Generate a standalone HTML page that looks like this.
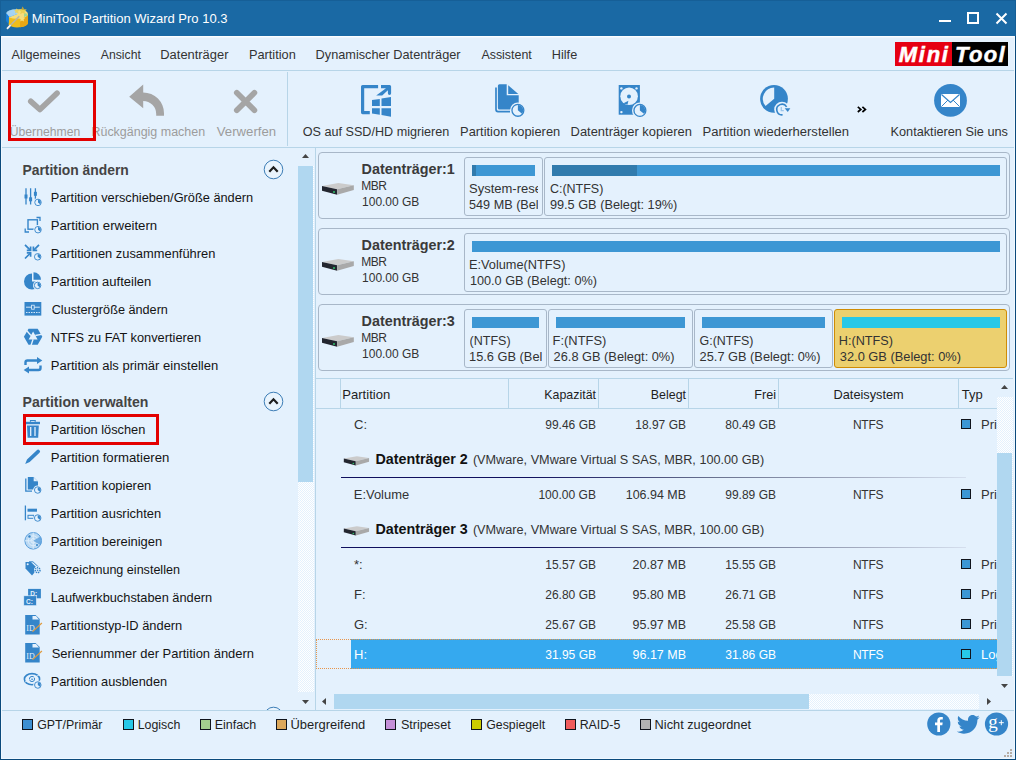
<!DOCTYPE html>
<html>
<head>
<meta charset="utf-8">
<title>MiniTool Partition Wizard Pro 10.3</title>
<style>
*{box-sizing:border-box;margin:0;padding:0}
html,body{width:1016px;height:760px;overflow:hidden;background:#e4f1fd}
body{font-family:"Liberation Sans",sans-serif;font-size:13px;color:#222;position:relative}
.a{position:absolute}
.t{position:absolute;white-space:nowrap;line-height:16px;height:16px;font-size:13px;color:#2b2b2b;margin-top:1px}
.r{text-align:right}
#win{position:absolute;left:0;top:0;width:1016px;height:760px;background:#e4f1fd;overflow:hidden}
#title{position:absolute;left:0;top:0;width:1016px;height:36px;background:#1a69a4;border-top:1px solid #165f97;border-left:1px solid #165f97;border-right:1px solid #165f97}
.hl{position:absolute;height:1px;background:#b7d5e8}
.vl{position:absolute;width:1px;background:#b7d5e8}
.menu{top:46px;color:#333}
.tb{top:123px;color:#333}
.tb.dis{color:#9c9c9c}
.sb{color:#141414}
.hd{font-weight:bold;color:#444;font-size:14px}
.redbox{position:absolute;border:3px solid #e30000;z-index:5}
.ic{position:absolute;width:20px;height:20px}
.dbox{position:absolute;left:318px;width:692px;height:67px;border:1px solid #a8b7c8;border-radius:4px}
.pbox{position:absolute;height:59px;border:1px solid #a8b7c8;border-radius:3px;overflow:hidden}
.trk{position:absolute;background-color:#e4f1fd;background-image:conic-gradient(#fff 25%,#e4f1fd 0 50%,#fff 0 75%,#e4f1fd 0);background-size:2px 2px}
.bar{position:absolute;height:11px;background:#3d97d4}
.dn{font-weight:bold;font-size:14px;color:#3a3a3a;letter-spacing:.3px}
.pt{color:#333}
.sq{position:absolute;width:10px;height:10px;border:1px solid #10141c}
.sq.lg{width:11px;height:11px}
.th{top:386px;color:#1e1e1e}
.sel{color:#fff}
</style>
</head>
<body>
<div id="win">
<!-- TITLE BAR -->
<div id="title"></div>
<svg class="a" style="left:4px;top:6px" width="26" height="25" viewBox="4 6 26 25">
<path d="M8.600 16V24.800C10.500 26.400 13.500 27.400 17 27.400C23.500 27.400 28 25.500 28 22.500V14Z" fill="#f0bd1a"/>
<path d="M20 14.500V27.200C24.800 26.700 28 25 28 22.500V14Z" fill="#e7a615"/>
<ellipse cx="17" cy="14" rx="11" ry="4.800" fill="#f6dc7a"/>
<path d="M6 14A11 4.800 0 0 1 17 9.200L17 14L8.800 17.200V23.500C7 22.600 6 21.500 6 20Z" fill="#1780dc"/>
<path d="M6.300 13.200A11 4.800 0 0 1 17 9.200L17.500 14L9.500 17Z" fill="#a4d3f4"/>
<path d="M24 12.500A11 4.800 0 0 1 27.800 15.500L24 17Z" fill="#9fd68f"/>
<path d="M16.800 8.200L17.600 10L19.500 10.200L18.100 11.500L18.500 13.400L16.800 12.400L15.100 13.400L15.500 11.500L14.100 10.200L16 10Z" fill="#ead35c"/>
<path d="M22.700 6.600L23.900 9.200L26.700 9.500L24.600 11.400L25.200 14.200L22.700 12.800L20.200 14.200L20.800 11.400L18.700 9.500L21.500 9.200Z" fill="#e9cf52"/>
<path d="M22.700 6.600L23.900 9.200L26.700 9.500L22.700 9.800L21.500 9.200Z" fill="#9a7a1a" opacity=".6"/>
<path d="M22 16L23 17.800L25 18L23.600 19.400L24 21.400L22 20.400L20.200 21.400L20.600 19.400L19.200 18L21.100 17.800Z" fill="#f3df7e"/>
<path d="M7.200 28.600L19.300 16.200" stroke="#b9b7a6" stroke-width="1.500"/><path d="M7 28.800L10.500 25.200" stroke="#f4f0f0" stroke-width="1.700"/>
</svg>
<div class="t" style="left:31.70px;top:10.00px;color:#fff;font-size:13.00px;letter-spacing:-0.000px">MiniTool Partition Wizard Pro 10.3</div>
<div class="a" style="left:939px;top:20px;width:12px;height:2px;background:#fff"></div>
<div class="a" style="left:967px;top:12px;width:12px;height:12px;border:2px solid #fff"></div>
<svg class="a" style="left:995px;top:12px" width="13" height="13" viewBox="0 0 13 13"><path d="M1.500 1.500L11.500 11.500M11.500 1.500L1.500 11.500" stroke="#fff" stroke-width="2" fill="none"/></svg>
<!-- MENU BAR -->
<div class="t menu" style="left:11.60px;font-size:12.60px;letter-spacing:0.000px">Allgemeines</div>
<div class="t menu" style="left:100.80px;font-size:12.21px;letter-spacing:0.000px">Ansicht</div>
<div class="t menu" style="left:160.31px;font-size:12.92px;letter-spacing:0.000px">Datenträger</div>
<div class="t menu" style="left:248.92px;font-size:12.79px;letter-spacing:0.000px">Partition</div>
<div class="t menu" style="left:315.62px;font-size:12.73px;letter-spacing:0.000px">Dynamischer Datenträger</div>
<div class="t menu" style="left:481.40px;font-size:12.43px;letter-spacing:0.000px">Assistent</div>
<div class="t menu" style="left:551.82px;font-size:12.70px;letter-spacing:0.000px">Hilfe</div>
<div class="a" style="left:895px;top:42px;width:57px;height:24px;background:#e60012"></div>
<div class="a" style="left:952px;top:42px;width:56px;height:24px;background:#000"></div>
<div class="a" style="left:898.8px;top:43.6px;height:22px;line-height:22px;font-size:22px;font-weight:bold;font-style:italic;color:#fff;letter-spacing:1.7px;-webkit-text-stroke:.5px #fff;white-space:nowrap">Mini</div>
<div class="a" style="left:955px;top:43.6px;height:22px;line-height:22px;font-size:22px;font-weight:bold;font-style:italic;color:#fff;letter-spacing:1.3px;-webkit-text-stroke:.5px #fff;white-space:nowrap">Tool</div>
<div class="hl" style="left:1px;top:70px;width:1014px"></div>
<!-- TOOLBAR -->
<div class="redbox" style="left:8px;top:80px;width:88px;height:61px"></div>
<svg class="a" style="left:24px;top:84px" width="40" height="34" viewBox="24 84 40 34"><path d="M30.800 101.300L39.900 109.500L57 93.300" stroke="#a5a5a5" stroke-width="5.700" stroke-linecap="round" stroke-linejoin="round" fill="none"/></svg>
<div class="t tb dis" style="left:9.76px;font-size:12.20px;letter-spacing:0.000px">Übernehmen</div>
<svg class="a" style="left:126px;top:82px" width="42" height="36" viewBox="126 82 42 36"><path d="M129.200 96.700L143.200 84.600V92.500A20.800 20.800 0 0 1 164 113.300V115.700H156.200V113.900A13 13 0 0 0 143.200 100.900V108.300Z" fill="#a5a5a5"/></svg>
<div class="t tb dis" style="left:91.44px;font-size:12.48px;letter-spacing:0.000px">Rückgängig machen</div>
<svg class="a" style="left:228px;top:84px" width="36" height="34" viewBox="228 84 36 34"><path d="M236.800 92.800L254.400 110.200M254.400 92.800L236.800 110.200" stroke="#a5a5a5" stroke-width="5.700" stroke-linecap="round" fill="none"/></svg>
<div class="t tb dis" style="left:216.80px;font-size:13.18px;letter-spacing:0.000px">Verwerfen</div>
<div class="vl" style="left:287px;top:72px;height:74px"></div>
<!-- OS migrate icon -->
<svg class="a" style="left:359px;top:83px" width="34" height="35" viewBox="359 83 34 35">
<path d="M378.100 86.600H362.600V112.600H369.800" stroke="#3585c9" stroke-width="3.200" fill="none" stroke-linejoin="round"/>
<path d="M381 85H389.600A1.500 1.500 0 0 1 391.100 86.500V93.300A1.600 1.600 0 0 1 387.900 93.300V90.300L382.200 95.600H376.200L386 88.200H381Z" fill="#3585c9"/>
<path d="M372 100.100L379.800 99V106H372ZM381.500 98.500L391 97V106H381.500ZM372 108.200H379.800V114.700L372 113.500ZM381.500 108.200H391V116.800L381.500 115Z" fill="#3585c9"/>
</svg>
<div class="t tb" style="left:302.80px;font-size:12.62px;letter-spacing:0.000px">OS auf SSD/HD migrieren</div>
<!-- Partition copy icon -->
<svg class="a" style="left:493px;top:83px" width="34" height="36" viewBox="493 83 34 36">
<path d="M496 87.600V109.600A2 2 0 0 0 498 111.600H510" stroke="#3585c9" stroke-width="1.700" fill="none"/>
<path d="M499.400 84.200H506.700V95.300H518.700V109.500H499.400A1.500 1.500 0 0 1 497.900 108V85.700A1.500 1.500 0 0 1 499.400 84.200Z" fill="#3585c9"/>
<path d="M508.200 85.200V93.900H518.300Z" fill="#3585c9"/>
<circle cx="517.9" cy="110.3" r="7.9" fill="#e4f1fd"/><circle cx="517.9" cy="110.3" r="5.95" fill="#e4f1fd" stroke="#3585c9" stroke-width="1.300"/><path d="M517.9 110.3V105.00A5.30 5.30 0 0 1 521.96 113.71Z" fill="#3585c9"/>
</svg>
<div class="t tb" style="left:460.11px;font-size:12.86px;letter-spacing:0.000px">Partition kopieren</div>
<!-- Disk copy icon -->
<svg class="a" style="left:617px;top:83px" width="32" height="36" viewBox="617 83 32 36">
<rect x="618.700" y="85" width="21.200" height="29.700" fill="#3585c9"/>
<circle cx="629.100" cy="96.300" r="8.800" fill="#e4f1fd"/><circle cx="629" cy="96.500" r="2" fill="#3585c9"/>
<path d="M623 103.400L628.400 100.800L627.500 104.600Z" fill="#3585c9"/>
<circle cx="621.400" cy="88.400" r="1.200" fill="#e4f1fd"/><circle cx="636.500" cy="88.400" r="1.200" fill="#e4f1fd"/><circle cx="621.400" cy="112.100" r="1.200" fill="#e4f1fd"/>
<circle cx="639.9" cy="110.4" r="7.9" fill="#e4f1fd"/><circle cx="639.9" cy="110.4" r="5.95" fill="#e4f1fd" stroke="#3585c9" stroke-width="1.300"/><path d="M639.9 110.4V105.10A5.30 5.30 0 0 1 643.96 113.81Z" fill="#3585c9"/>
</svg>
<div class="t tb" style="left:570.61px;font-size:12.92px;letter-spacing:-0.000px">Datenträger kopieren</div>
<!-- Partition recovery icon -->
<svg class="a" style="left:759px;top:83px" width="34" height="36" viewBox="759 83 34 36">
<circle cx="774" cy="98.800" r="13.900" fill="#3585c9"/>
<path d="M774.200 98.700V87.400A11.300 11.300 0 0 0 765.54 105.96Z" fill="#e4f1fd"/>
<circle cx="782" cy="109.500" r="7.800" fill="#e4f1fd"/>
<path d="M786.600 106.800A5.300 5.300 0 1 0 782.600 114.800" stroke="#3585c9" stroke-width="1.600" fill="none"/>
<path d="M784.700 108.200H790.300L787.800 112Z" fill="#3585c9"/>
<path d="M781.300 107V110.700H783.800" stroke="#9cc6ea" stroke-width="1.300" fill="none"/>
</svg>
<div class="t tb" style="left:702.60px;font-size:13.05px;letter-spacing:0.000px">Partition wiederherstellen</div>
<svg class="a" style="left:856px;top:105px" width="12" height="9" viewBox="856 105 12 9"><path d="M857.800 106.800L860.800 109.400L857.800 112M862.400 106.800L865.400 109.400L862.400 112" stroke="#000" stroke-width="1.700" fill="none"/></svg>
<!-- Contact icon -->
<svg class="a" style="left:933px;top:83px" width="35" height="35" viewBox="933 83 35 35">
<circle cx="950.500" cy="100.400" r="16.400" fill="#3585c9"/>
<rect x="941" y="94" width="19" height="13" rx="1" fill="#fff"/>
<path d="M941.500 94.500L950.500 102.500L959.500 94.500" stroke="#3585c9" stroke-width="1.200" fill="none"/>
<path d="M941.500 106.500L948 100M959.500 106.500L953 100" stroke="#3585c9" stroke-width="1" fill="none"/>
</svg>
<div class="t tb" style="left:890.52px;font-size:12.72px;letter-spacing:-0.000px">Kontaktieren Sie uns</div>
<div class="hl" style="left:1px;top:147px;width:1014px"></div>
<!-- LEFT PANEL -->
<div class="t hd" style="left:22.50px;top:161.35px;font-size:13.87px;letter-spacing:0.000px">Partition ändern</div>
<svg class="a" style="left:263px;top:159px" width="21" height="21" viewBox="0 0 21 21"><circle cx="10.500" cy="10.500" r="9.300" fill="#e9f4fd" stroke="#3c7db6" stroke-width="1"/><path d="M6.300 12.700L10.500 8.300L14.700 12.700" stroke="#1e1e1e" stroke-width="2.200" fill="none"/></svg>
<!-- icons group 1 -->
<svg class="a" style="left:23px;top:187px" width="20" height="20" viewBox="23 187 20 20">
<path d="M26 188.200V204.500M30.600 188.200V204.500M35.400 188.200V199.500" stroke="#3585c9" stroke-width="1.300" fill="none"/>
<rect x="24.500" y="194.500" width="3" height="4" fill="#3585c9"/><rect x="29.100" y="197.300" width="3" height="4" fill="#3585c9"/><rect x="33.900" y="191.800" width="3" height="4" fill="#3585c9"/>
<circle cx="38.0" cy="202.4" r="4.6" fill="#e4f1fd"/><circle cx="38.0" cy="202.4" r="3.25" fill="#e4f1fd" stroke="#3585c9" stroke-width=".900"/><path d="M38.0 202.4V199.60A2.80 2.80 0 0 1 40.14 204.20Z" fill="#3585c9"/>
</svg>
<div class="t sb" style="left:50.72px;top:189.07px;font-size:12.79px;letter-spacing:0.000px">Partition verschieben/Größe ändern</div>
<svg class="a" style="left:23px;top:215px" width="20" height="20" viewBox="23 215 20 20">
<rect x="28" y="219.800" width="9.400" height="9.400" fill="none" stroke="#3585c9" stroke-width="1.400"/>
<path d="M36.500 217.500H40V221M25.200 228.500V232H29" stroke="#3585c9" stroke-width="1.300" fill="none"/>
<circle cx="38.0" cy="229.7" r="4.6" fill="#e4f1fd"/><circle cx="38.0" cy="229.7" r="3.25" fill="#e4f1fd" stroke="#3585c9" stroke-width=".900"/><path d="M38.0 229.7V226.90A2.80 2.80 0 0 1 40.14 231.50Z" fill="#3585c9"/>
</svg>
<div class="t sb" style="left:50.68px;top:216.92px;font-size:13.23px;letter-spacing:-0.000px">Partition erweitern</div>
<svg class="a" style="left:23px;top:243px" width="20" height="20" viewBox="23 243 20 20">
<path d="M25 244.800L30 249.800M39 244.800L34 249.800M25 258.500L30 253.500" stroke="#3585c9" stroke-width="1.700" fill="none"/>
<path d="M26.800 250.400H30.600V246.600M37.200 250.400H33.400V246.600M26.800 252.900H30.600V256.700" stroke="#3585c9" stroke-width="1.700" fill="none"/>
<circle cx="37.7" cy="256.8" r="4.6" fill="#e4f1fd"/><circle cx="37.7" cy="256.8" r="3.25" fill="#e4f1fd" stroke="#3585c9" stroke-width=".900"/><path d="M37.7 256.8V254.00A2.80 2.80 0 0 1 39.84 258.60Z" fill="#3585c9"/>
</svg>
<div class="t sb" style="left:50.71px;top:245.04px;font-size:12.88px;letter-spacing:0.000px">Partitionen zusammenführen</div>
<svg class="a" style="left:23px;top:271px" width="20" height="20" viewBox="23 271 20 20">
<path d="M32 273.500A8 8 0 1 0 40 281.500H32Z" fill="#3585c9"/><path d="M33.500 272.200A7.500 7.500 0 0 1 41 279.800H33.500Z" fill="#3585c9"/>
<circle cx="37.6" cy="285.4" r="4.6" fill="#e4f1fd"/><circle cx="37.6" cy="285.4" r="3.25" fill="#e4f1fd" stroke="#3585c9" stroke-width=".900"/><path d="M37.6 285.4V282.60A2.80 2.80 0 0 1 39.74 287.20Z" fill="#3585c9"/>
</svg>
<div class="t sb" style="left:50.70px;top:272.99px;font-size:13.02px;letter-spacing:0.000px">Partition aufteilen</div>
<svg class="a" style="left:23px;top:299px" width="20" height="20" viewBox="23 299 20 20">
<rect x="24.500" y="302" width="16.800" height="13.600" fill="#3585c9"/>
<path d="M26 307.200H39.800" stroke="#e4f1fd" stroke-width=".9"/><rect x="31.600" y="305.200" width="2.600" height="4" fill="#3585c9" stroke="#e4f1fd" stroke-width=".8"/>
<path d="M26 312.500H39.800" stroke="#e4f1fd" stroke-width=".9" stroke-dasharray="1.500 1"/>
</svg>
<div class="t sb" style="left:51.70px;top:301.11px;font-size:12.68px;letter-spacing:0.000px">Clustergröße ändern</div>
<svg class="a" style="left:23px;top:327px" width="20" height="20" viewBox="23 327 20 20">
<path d="M42.30 336.80L37.70 344.77L28.50 344.77L23.90 336.80L28.50 328.83L37.70 328.83Z" fill="#3585c9"/><path d="M33.10 331.60L35.35 335.50L37.60 339.40L33.10 339.40L28.60 339.40L30.85 335.50Z" fill="#e4f1fd"/><path d="M35.27 335.55L42.73 334.10M33.10 339.30L30.63 346.49M30.93 335.55L25.95 329.81" stroke="#e4f1fd" stroke-width="1.400" fill="none"/>
</svg>
<div class="t sb" style="left:50.72px;top:329.07px;font-size:12.80px;letter-spacing:0.000px">NTFS zu FAT konvertieren</div>
<svg class="a" style="left:22px;top:355px" width="22" height="20" viewBox="22 355 22 20">
<path d="M25.500 365V362.500A2 2 0 0 1 27.500 360.500H38" stroke="#3585c9" stroke-width="2.400" fill="none"/><path d="M37 357L42.300 360.500L37 364Z" fill="#3585c9"/>
<path d="M40.500 365.500V368A2 2 0 0 1 38.500 370H28" stroke="#3585c9" stroke-width="2.400" fill="none"/><path d="M29 366.500L23.700 370L29 373.500Z" fill="#3585c9"/>
</svg>
<div class="t sb" style="left:50.70px;top:356.98px;font-size:13.05px;letter-spacing:0.000px">Partition als primär einstellen</div>
<!-- group 2 -->
<div class="t hd" style="left:22.50px;top:393.27px;font-size:14.08px;letter-spacing:0.000px">Partition verwalten</div>
<svg class="a" style="left:263px;top:391px" width="21" height="21" viewBox="0 0 21 21"><circle cx="10.500" cy="10.500" r="9.300" fill="#e9f4fd" stroke="#3c7db6" stroke-width="1"/><path d="M6.300 12.700L10.500 8.300L14.700 12.700" stroke="#1e1e1e" stroke-width="2.200" fill="none"/></svg>
<div class="redbox" style="left:23px;top:414px;width:136px;height:31px"></div>
<svg class="a" style="left:23px;top:419px" width="20" height="20" viewBox="23 419 20 20">
<path d="M30.500 421.800V420.500H35.200V421.800" stroke="#3585c9" stroke-width="1.200" fill="none"/><rect x="25.800" y="421.800" width="14.200" height="2.400" fill="#3585c9"/>
<path d="M27 425.500H38.800L38.200 437.700H27.600Z" fill="#3585c9"/><path d="M30.700 427V436M35 427V436" stroke="#e4f1fd" stroke-width="1.300"/>
</svg>
<div class="t sb" style="left:50.72px;top:421.07px;font-size:12.80px;letter-spacing:-0.000px">Partition löschen</div>
<svg class="a" style="left:23px;top:447px" width="20" height="20" viewBox="23 447 20 20">
<path d="M25.200 464L27 459.500L36.800 450.200A1.500 1.500 0 0 1 39.500 452.800L29.700 462Z" fill="#3585c9"/>
</svg>
<div class="t sb" style="left:50.69px;top:448.94px;font-size:13.18px;letter-spacing:0.000px">Partition formatieren</div>
<svg class="a" style="left:23px;top:475px" width="20" height="20" viewBox="23 475 20 20">
<path d="M25.800 478.500V491.200H32" stroke="#3585c9" stroke-width="1.300" fill="none"/>
<path d="M27.800 477H33.500L38 481.500V489.500H27.800Z" fill="#3585c9"/><path d="M33.700 477.300V481.300H37.700Z" fill="#e4f1fd"/>
<circle cx="37.7" cy="490.0" r="4.6" fill="#e4f1fd"/><circle cx="37.7" cy="490.0" r="3.25" fill="#e4f1fd" stroke="#3585c9" stroke-width=".900"/><path d="M37.7 490.0V487.20A2.80 2.80 0 0 1 39.84 491.80Z" fill="#3585c9"/>
</svg>
<div class="t sb" style="left:50.71px;top:477.02px;font-size:12.93px;letter-spacing:0.000px">Partition kopieren</div>
<svg class="a" style="left:23px;top:503px" width="20" height="20" viewBox="23 503 20 20">
<path d="M25.400 505.500V520.300" stroke="#3585c9" stroke-width="1.300"/><rect x="27.500" y="508.700" width="9.500" height="3" fill="#3585c9"/><rect x="28" y="515.300" width="5.500" height="3" fill="none" stroke="#3585c9" stroke-width="1"/>
<circle cx="37.7" cy="518.0" r="4.6" fill="#e4f1fd"/><circle cx="37.7" cy="518.0" r="3.25" fill="#e4f1fd" stroke="#3585c9" stroke-width=".900"/><path d="M37.7 518.0V515.20A2.80 2.80 0 0 1 39.84 519.80Z" fill="#3585c9"/>
</svg>
<div class="t sb" style="left:50.71px;top:505.03px;font-size:12.90px;letter-spacing:0.000px">Partition ausrichten</div>
<svg class="a" style="left:23px;top:531px" width="20" height="20" viewBox="23 531 20 20">
<circle cx="33.200" cy="540.800" r="8.300" fill="#b8d8f3" stroke="#5a9fdc" stroke-width="1"/><circle cx="33.200" cy="540.800" r="5" fill="none" stroke="#e4f1fd" stroke-width=".8"/><circle cx="33.200" cy="540.800" r="2.300" fill="none" stroke="#e4f1fd" stroke-width=".8"/>
<path d="M33.200 532.500V549M25 540.800H41.500" stroke="#e4f1fd" stroke-width=".8"/><path d="M33.200 540.800L40.500 536.500A8.300 8.300 0 0 1 40.500 545Z" fill="#5a9fdc" opacity=".8"/><circle cx="29.500" cy="536.500" r="1.200" fill="#3585c9"/><circle cx="37" cy="545" r="1" fill="#3585c9"/>
</svg>
<div class="t sb" style="left:50.70px;top:533.02px;font-size:12.95px;letter-spacing:0.000px">Partition bereinigen</div>
<svg class="a" style="left:23px;top:559px" width="20" height="20" viewBox="23 559 20 20">
<path d="M25.500 562H31L36.500 567.500V570L32 575.500L25.500 568.500Z" fill="#3585c9"/><path d="M29 561.800H33L39 567.500" stroke="#3585c9" stroke-width="1" fill="none"/><circle cx="27.700" cy="564.300" r="1" fill="#e4f1fd"/>
<circle cx="37.600" cy="570.200" r="3.600" fill="#e4f1fd"/><circle cx="37.600" cy="570.200" r="2.400" fill="none" stroke="#3585c9" stroke-width="1.500" stroke-dasharray="1.200 .700"/><circle cx="37.600" cy="570.200" r=".8" fill="#3585c9"/>
</svg>
<div class="t sb" style="left:50.73px;top:561.15px;font-size:12.57px;letter-spacing:0.000px">Bezeichnung einstellen</div>
<svg class="a" style="left:23px;top:587px" width="20" height="20" viewBox="23 587 20 20">
<rect x="28.100" y="588.900" width="12.800" height="9.400" fill="#3585c9"/><rect x="23.800" y="595.800" width="12.600" height="9.900" fill="#3585c9" stroke="#e4f1fd" stroke-width=".6"/>
<text x="30.300" y="596.300" font-family="Liberation Sans" font-weight="bold" font-size="6.500" fill="#e4f1fd">D:</text><text x="26" y="603.800" font-family="Liberation Sans" font-weight="bold" font-size="6.500" fill="#e4f1fd">C:</text>
</svg>
<div class="t sb" style="left:50.71px;top:589.07px;font-size:12.81px;letter-spacing:0.000px">Laufwerkbuchstaben ändern</div>
<svg class="a" style="left:23px;top:613px" width="20" height="24" viewBox="23 613 20 24">
<path d="M25.200 615H35.500L39.700 619V634.500H25.200Z" fill="#3585c9"/><path d="M32.500 616H36L39 619.500H32.500Z" fill="#e4f1fd"/>
<text x="26.300" y="630.500" font-family="Liberation Serif" font-size="8" fill="#e4f1fd">ID</text><path d="M32.500 631.600L41.900 623" stroke="#e09a3c" stroke-width="1.200"/>
</svg>
<div class="t sb" style="left:50.71px;top:617.05px;font-size:12.87px;letter-spacing:0.000px">Partitionstyp-ID ändern</div>
<svg class="a" style="left:23px;top:641px" width="20" height="24" viewBox="23 641 20 24">
<path d="M25.200 643H35.500L39.700 647V662.500H25.200Z" fill="#3585c9"/><path d="M32.500 644H36L39 647.500H32.500Z" fill="#e4f1fd"/>
<text x="26.300" y="658.500" font-family="Liberation Serif" font-size="8" fill="#e4f1fd">ID</text><path d="M32.500 659.600L41.900 651" stroke="#e09a3c" stroke-width="1.200"/>
</svg>
<div class="t sb" style="left:51.70px;top:645.01px;font-size:12.96px;letter-spacing:0.000px">Seriennummer der Partition ändern</div>
<svg class="a" style="left:23px;top:671px" width="20" height="20" viewBox="23 671 20 20">
<ellipse cx="32" cy="679.200" rx="7.600" ry="5.600" fill="#e4f1fd" stroke="#3585c9" stroke-width="1.600"/><circle cx="32" cy="679" r="2.600" fill="none" stroke="#3585c9" stroke-width="1"/><circle cx="32" cy="679" r="1" fill="#3585c9"/>
<path d="M25 682L39 675" stroke="#e4f1fd" stroke-width=".8"/>
<circle cx="37.8" cy="685.0" r="4.6" fill="#e4f1fd"/><circle cx="37.8" cy="685.0" r="3.25" fill="#e4f1fd" stroke="#3585c9" stroke-width=".900"/><path d="M37.8 685.0V682.20A2.80 2.80 0 0 1 39.94 686.80Z" fill="#3585c9"/>
</svg>
<div class="t sb" style="left:50.72px;top:673.08px;font-size:12.78px;letter-spacing:0.000px">Partition ausblenden</div>
<!-- partial next-group button clipped by bottom -->
<div class="a" style="left:263px;top:700px;width:21px;height:10px;overflow:hidden"><svg class="a" style="left:0;top:6px" width="21" height="21" viewBox="0 0 21 21"><circle cx="10.500" cy="10.500" r="9.300" fill="#e9f4fd" stroke="#3c7db6" stroke-width="1"/></svg></div>
<!-- left scrollbar -->
<div class="trk" style="left:298px;top:166px;width:16px;height:526px"></div>
<div class="a" style="left:298px;top:166px;width:15px;height:316px;background:#b0d7f0"></div>
<svg class="a" style="left:302px;top:154px" width="7" height="4" viewBox="0 0 7 4"><path d="M0 4L3.500 0L7 4Z" fill="#454545"/></svg>
<svg class="a" style="left:302px;top:700px" width="7" height="4" viewBox="0 0 7 4"><path d="M0 0L3.500 4L7 0Z" fill="#454545"/></svg>
<div class="vl" style="left:315px;top:148px;height:562px"></div>
<!-- DISK MAP -->
<div class="dbox" style="top:152px"></div>
<svg class="a" style="left:321px;top:182px" width="34" height="14" viewBox="321 182 34 14"><path d="M322 186L338.400 182.900L353.800 185.300L337.100 189.300Z" fill="#cbcbcb"/><path d="M322 186L337.100 189.300V194.700L322 190.700Z" fill="#23262f"/><path d="M337.100 189.300L353.800 185.300V190.100L337.100 194.700Z" fill="#a9a9a9"/><circle cx="334" cy="192.100" r="1" fill="#2fc06a"/></svg>
<div class="t dn" style="left:361.60px;top:160.14px;font-size:14.33px;letter-spacing:0.000px">Datenträger:1</div>
<div class="t pt" style="left:361.18px;top:177.35px;font-size:12.00px;letter-spacing:-0.492px">MBR</div>
<div class="t pt" style="left:362.10px;top:193.35px;font-size:12.00px;letter-spacing:-0.019px">100.00 GB</div>
<div class="dbox" style="top:228px"></div>
<svg class="a" style="left:321px;top:258px" width="34" height="14" viewBox="321 182 34 14"><path d="M322 186L338.400 182.900L353.800 185.300L337.100 189.300Z" fill="#cbcbcb"/><path d="M322 186L337.100 189.300V194.700L322 190.700Z" fill="#23262f"/><path d="M337.100 189.300L353.800 185.300V190.100L337.100 194.700Z" fill="#a9a9a9"/><circle cx="334" cy="192.100" r="1" fill="#2fc06a"/></svg>
<div class="t dn" style="left:361.60px;top:236.14px;font-size:14.33px;letter-spacing:0.000px">Datenträger:2</div>
<div class="t pt" style="left:361.18px;top:253.35px;font-size:12.00px;letter-spacing:-0.492px">MBR</div>
<div class="t pt" style="left:362.10px;top:269.35px;font-size:12.00px;letter-spacing:-0.019px">100.00 GB</div>
<div class="dbox" style="top:304px"></div>
<svg class="a" style="left:321px;top:334px" width="34" height="14" viewBox="321 182 34 14"><path d="M322 186L338.400 182.900L353.800 185.300L337.100 189.300Z" fill="#cbcbcb"/><path d="M322 186L337.100 189.300V194.700L322 190.700Z" fill="#23262f"/><path d="M337.100 189.300L353.800 185.300V190.100L337.100 194.700Z" fill="#a9a9a9"/><circle cx="334" cy="192.100" r="1" fill="#2fc06a"/></svg>
<div class="t dn" style="left:361.60px;top:312.14px;font-size:14.33px;letter-spacing:0.000px">Datenträger:3</div>
<div class="t pt" style="left:361.18px;top:329.35px;font-size:12.00px;letter-spacing:-0.492px">MBR</div>
<div class="t pt" style="left:362.10px;top:345.35px;font-size:12.00px;letter-spacing:-0.019px">100.00 GB</div>
<div class="pbox" style="left:464px;top:157px;width:79px"></div><div class="bar" style="left:472px;top:165px;width:4px;background:#317bad"></div><div class="bar" style="left:476px;top:165px;width:59px;background:#3d97d4"></div><div class="t pt" style="left:469px;top:180.30px;width:69px;overflow:hidden">System-reserviert</div><div class="t pt" style="left:469px;top:196.41px;width:69px;overflow:hidden;font-size:12.67px;letter-spacing:0.000px">549 MB (Belegt: 5%)</div>
<div class="pbox" style="left:544px;top:157px;width:463px"></div><div class="bar" style="left:552px;top:165px;width:85px;background:#317bad"></div><div class="bar" style="left:637px;top:165px;width:363px;background:#3d97d4"></div><div class="t pt" style="left:549.90px;top:180.47px;font-size:12.51px;letter-spacing:0.000px">C:(NTFS)</div><div class="t pt" style="left:549.90px;top:196.39px;font-size:12.74px;letter-spacing:-0.000px">99.5 GB (Belegt: 19%)</div>
<div class="pbox" style="left:464px;top:233px;width:543px"></div><div class="bar" style="left:472px;top:241px;width:528px;background:#3d97d4"></div><div class="t pt" style="left:468.92px;top:256.37px;font-size:12.78px;letter-spacing:0.000px">E:Volume(NTFS)</div><div class="t pt" style="left:469.90px;top:272.40px;font-size:12.71px;letter-spacing:-0.000px">100.0 GB (Belegt: 0%)</div>
<div class="pbox" style="left:464px;top:309px;width:83px"></div><div class="bar" style="left:472px;top:317px;width:67px;background:#3d97d4"></div><div class="t pt" style="left:469.60px;top:332.47px;width:73px;overflow:hidden;font-size:12.52px;letter-spacing:-0.000px">(NTFS)</div><div class="t pt" style="left:469px;top:348.36px;width:73px;overflow:hidden;font-size:12.82px;letter-spacing:-0.000px">15.6 GB (Belegt: 0%)</div>
<div class="pbox" style="left:548px;top:309px;width:145px"></div><div class="bar" style="left:556px;top:317px;width:129px;background:#3d97d4"></div><div class="t pt" style="left:552.61px;top:332.34px;font-size:12.90px;letter-spacing:0.000px">F:(NTFS)</div><div class="t pt" style="left:553.60px;top:348.37px;font-size:12.81px;letter-spacing:-0.000px">26.8 GB (Belegt: 0%)</div>
<div class="pbox" style="left:694px;top:309px;width:139px"></div><div class="bar" style="left:702px;top:317px;width:123px;background:#3d97d4"></div><div class="t pt" style="left:699.60px;top:332.49px;font-size:12.44px;letter-spacing:0.000px">G:(NTFS)</div><div class="t pt" style="left:699.60px;top:348.37px;font-size:12.81px;letter-spacing:-0.000px">25.7 GB (Belegt: 0%)</div>
<div class="pbox" style="left:834px;top:309px;width:173px;background:#ecd06f;border-color:#cf8c05"></div><div class="bar" style="left:842px;top:317px;width:158px;background:#27c8e8"></div><div class="t pt" style="left:838.83px;top:332.41px;font-size:12.67px;letter-spacing:0.000px">H:(NTFS)</div><div class="t pt" style="left:839.80px;top:348.36px;font-size:12.84px;letter-spacing:0.000px">32.0 GB (Belegt: 0%)</div>
<!-- PARTITION TABLE -->
<div class="hl" style="left:316px;top:378px;width:697px"></div>
<div class="hl" style="left:316px;top:408px;width:681px"></div>
<div class="vl" style="left:340px;top:379px;height:29px"></div>
<div class="vl" style="left:508px;top:379px;height:29px"></div>
<div class="vl" style="left:598px;top:379px;height:29px"></div>
<div class="vl" style="left:688px;top:379px;height:29px"></div>
<div class="vl" style="left:778px;top:379px;height:29px"></div>
<div class="vl" style="left:958px;top:379px;height:29px"></div>
<div class="t th" style="left:342.29px;font-size:13.07px;letter-spacing:0.000px">Partition</div>
<div class="t th r" style="left:516px;width:80px;font-size:12.40px;letter-spacing:0.000px">Kapazität</div>
<div class="t th r" style="left:606px;width:80px;font-size:12.41px;letter-spacing:0.000px">Belegt</div>
<div class="t th r" style="left:696px;width:80px;font-size:12.64px;letter-spacing:0.000px">Frei</div>
<div class="t th" style="left:833.52px;font-size:12.78px;letter-spacing:0.000px">Dateisystem</div>
<div class="t th" style="left:961.70px;font-size:12.99px;letter-spacing:0.000px">Typ</div>
<div class="a" style="left:351px;top:639px;width:646px;height:30px;background:#35a9ef"></div>
<div class="a" style="left:316px;top:639px;width:681px;height:30px;border:1px dotted #e8954a;border-right:none"></div>
<div class="t pt" style="left:354px;top:416px">C:</div><div class="t pt r" style="left:516px;top:416.34px;width:80px;font-size:12.03px;letter-spacing:0.000px">99.46 GB</div><div class="t pt r" style="left:606px;top:416.34px;width:80px;font-size:12.03px;letter-spacing:0.000px">18.97 GB</div><div class="t pt r" style="left:696px;top:416.34px;width:80px;font-size:12.03px;letter-spacing:0.000px">80.49 GB</div><div class="t pt" style="left:852.88px;top:416.35px;font-size:12.00px;letter-spacing:-0.204px">NTFS</div><div class="sq" style="left:961px;top:419px;background:#3d97d4"></div><div class="t pt" style="left:981px;top:416px;width:16px;overflow:hidden">Primär</div>
<svg class="a" style="left:343px;top:455px" width="27" height="12" viewBox="321 182 34 14"><path d="M322 186L338.400 182.900L353.800 185.300L337.100 189.300Z" fill="#cbcbcb"/><path d="M322 186L337.100 189.300V194.700L322 190.700Z" fill="#23262f"/><path d="M337.100 189.300L353.800 185.300V190.100L337.100 194.700Z" fill="#a9a9a9"/><circle cx="334" cy="192.100" r="1" fill="#2fc06a"/></svg><div class="t dn dh" style="left:375.50px;top:450.40px;color:#111;font-size:14.30px;letter-spacing:-0.000px">Datenträger 2</div><div class="t pt" style="left:472.90px;top:451.11px;font-size:12.68px;letter-spacing:0.000px">(VMware, VMware Virtual S SAS, MBR, 100.00 GB)</div><div class="a" style="left:341px;top:477px;width:625px;height:1px;background:linear-gradient(to right,#10105e 0%,#10105e 30%,#6a7390 60%,#a9b1c4 85%,#d5dfee 100%)"></div>
<div class="t pt" style="left:353.81px;top:486.03px;font-size:12.93px;letter-spacing:0.000px">E:Volume</div><div class="t pt r" style="left:516px;top:486.33px;width:80px;font-size:12.05px;letter-spacing:0.000px">100.00 GB</div><div class="t pt r" style="left:606px;top:486.19px;width:80px;font-size:12.46px;letter-spacing:-0.000px">106.94 MB</div><div class="t pt r" style="left:696px;top:486.34px;width:80px;font-size:12.03px;letter-spacing:0.000px">99.89 GB</div><div class="t pt" style="left:852.88px;top:486.35px;font-size:12.00px;letter-spacing:-0.204px">NTFS</div><div class="sq" style="left:961px;top:489px;background:#3d97d4"></div><div class="t pt" style="left:981px;top:486px;width:16px;overflow:hidden">Primär</div>
<svg class="a" style="left:343px;top:525px" width="27" height="12" viewBox="321 182 34 14"><path d="M322 186L338.400 182.900L353.800 185.300L337.100 189.300Z" fill="#cbcbcb"/><path d="M322 186L337.100 189.300V194.700L322 190.700Z" fill="#23262f"/><path d="M337.100 189.300L353.800 185.300V190.100L337.100 194.700Z" fill="#a9a9a9"/><circle cx="334" cy="192.100" r="1" fill="#2fc06a"/></svg><div class="t dn dh" style="left:375.50px;top:520.40px;color:#111;font-size:14.30px;letter-spacing:-0.000px">Datenträger 3</div><div class="t pt" style="left:472.90px;top:521.11px;font-size:12.68px;letter-spacing:0.000px">(VMware, VMware Virtual S SAS, MBR, 100.00 GB)</div><div class="a" style="left:341px;top:547px;width:625px;height:1px;background:linear-gradient(to right,#10105e 0%,#10105e 30%,#6a7390 60%,#a9b1c4 85%,#d5dfee 100%)"></div>
<div class="t pt" style="left:354px;top:556px">*:</div><div class="t pt r" style="left:516px;top:556.34px;width:80px;font-size:12.03px;letter-spacing:0.000px">15.57 GB</div><div class="t pt r" style="left:606px;top:556.18px;width:80px;font-size:12.49px;letter-spacing:-0.000px">20.87 MB</div><div class="t pt r" style="left:696px;top:556.34px;width:80px;font-size:12.03px;letter-spacing:0.000px">15.55 GB</div><div class="t pt" style="left:852.88px;top:556.35px;font-size:12.00px;letter-spacing:-0.204px">NTFS</div><div class="sq" style="left:961px;top:559px;background:#3d97d4"></div><div class="t pt" style="left:981px;top:556px;width:16px;overflow:hidden">Primär</div>
<div class="t pt" style="left:354px;top:586px">F:</div><div class="t pt r" style="left:516px;top:586.34px;width:80px;font-size:12.03px;letter-spacing:0.000px">26.80 GB</div><div class="t pt r" style="left:606px;top:586.18px;width:80px;font-size:12.49px;letter-spacing:-0.000px">95.80 MB</div><div class="t pt r" style="left:696px;top:586.34px;width:80px;font-size:12.03px;letter-spacing:0.000px">26.71 GB</div><div class="t pt" style="left:852.88px;top:586.35px;font-size:12.00px;letter-spacing:-0.204px">NTFS</div><div class="sq" style="left:961px;top:589px;background:#3d97d4"></div><div class="t pt" style="left:981px;top:586px;width:16px;overflow:hidden">Primär</div>
<div class="t pt" style="left:354px;top:616px">G:</div><div class="t pt r" style="left:516px;top:616.34px;width:80px;font-size:12.03px;letter-spacing:0.000px">25.67 GB</div><div class="t pt r" style="left:606px;top:616.18px;width:80px;font-size:12.49px;letter-spacing:-0.000px">95.97 MB</div><div class="t pt r" style="left:696px;top:616.34px;width:80px;font-size:12.03px;letter-spacing:0.000px">25.58 GB</div><div class="t pt" style="left:852.88px;top:616.35px;font-size:12.00px;letter-spacing:-0.204px">NTFS</div><div class="sq" style="left:961px;top:619px;background:#3d97d4"></div><div class="t pt" style="left:981px;top:616px;width:16px;overflow:hidden">Primär</div>
<div class="t pt sel" style="left:354px;top:646px">H:</div><div class="t pt sel r" style="left:516px;top:646.34px;width:80px;font-size:12.03px;letter-spacing:0.000px">31.95 GB</div><div class="t pt sel r" style="left:606px;top:646.18px;width:80px;font-size:12.49px;letter-spacing:-0.000px">96.17 MB</div><div class="t pt sel r" style="left:696px;top:646.34px;width:80px;font-size:12.03px;letter-spacing:0.000px">31.86 GB</div><div class="t pt sel" style="left:852.88px;top:646.35px;font-size:12.00px;letter-spacing:-0.204px">NTFS</div><div class="sq" style="left:961px;top:649px;background:#27c8e8"></div><div class="t pt sel" style="left:981px;top:646px;width:16px;overflow:hidden">Logisch</div>
<div class="trk" style="left:997px;top:397px;width:16px;height:279px"></div>
<div class="a" style="left:997px;top:453px;width:15px;height:223px;background:#b0d7f0"></div>
<svg class="a" style="left:1001px;top:385px" width="7" height="4" viewBox="0 0 7 4"><path d="M0 4L3.500 0L7 4Z" fill="#454545"/></svg>
<svg class="a" style="left:1001px;top:684px" width="7" height="4" viewBox="0 0 7 4"><path d="M0 0L3.500 4L7 0Z" fill="#454545"/></svg>
<div class="trk" style="left:334px;top:694px;width:645px;height:15px"></div>
<div class="a" style="left:334px;top:694px;width:475px;height:15px;background:#b0d7f0"></div>
<svg class="a" style="left:322px;top:698px" width="4" height="7" viewBox="0 0 4 7"><path d="M4 0L0 3.500L4 7Z" fill="#454545"/></svg>
<svg class="a" style="left:987px;top:698px" width="4" height="7" viewBox="0 0 4 7"><path d="M0 0L4 3.500L0 7Z" fill="#454545"/></svg>
<div class="hl" style="left:1px;top:710px;width:1013px"></div>
<!-- LEGEND -->
<div class="sq lg" style="left:22px;top:719px;background:#3d8fd1"></div><div class="t" style="left:37.20px;top:716.22px;color:#1e1e1e;font-size:12.37px;letter-spacing:0.000px">GPT/Primär</div>
<div class="sq lg" style="left:123px;top:719px;background:#27c8e8"></div><div class="t" style="left:137.65px;top:716.21px;color:#1e1e1e;font-size:12.38px;letter-spacing:0.000px">Logisch</div>
<div class="sq lg" style="left:200px;top:719px;background:#a3d08e"></div><div class="t" style="left:214.64px;top:716.17px;color:#1e1e1e;font-size:12.50px;letter-spacing:0.000px">Einfach</div>
<div class="sq lg" style="left:276px;top:719px;background:#dca85c"></div><div class="t" style="left:290.50px;top:716.02px;color:#1e1e1e;font-size:12.94px;letter-spacing:0.000px">Übergreifend</div>
<div class="sq lg" style="left:385px;top:719px;background:#c590d8"></div><div class="t" style="left:400.90px;top:716.13px;color:#1e1e1e;font-size:12.63px;letter-spacing:0.000px">Stripeset</div>
<div class="sq lg" style="left:471px;top:719px;background:#cccc00"></div><div class="t" style="left:486.30px;top:716.24px;color:#1e1e1e;font-size:12.31px;letter-spacing:0.000px">Gespiegelt</div>
<div class="sq lg" style="left:565px;top:719px;background:#f05c5c"></div><div class="t" style="left:579.65px;top:716.21px;color:#1e1e1e;font-size:12.41px;letter-spacing:0.000px">RAID-5</div>
<div class="sq lg" style="left:640px;top:719px;background:#b4b4b4"></div><div class="t" style="left:654.62px;top:716.08px;color:#1e1e1e;font-size:12.78px;letter-spacing:0.000px">Nicht zugeordnet</div>
<svg class="a" style="left:926px;top:712.4px" width="84" height="25" viewBox="926 713 84 25"><circle cx="938.800" cy="725" r="11.600" fill="#3585c9"/><path d="M940 733V726.200H942.300L942.700 723.500H940V721.800C940 721 940.300 720.500 941.400 720.500H942.800V718.100C942.500 718.100 941.700 718 940.800 718C938.700 718 937.300 719.200 937.300 721.500V723.500H935V726.200H937.300V733Z" fill="#fff"/><path d="M979.700 718.300C978.800 718.700 977.900 718.900 977 719C978 718.400 978.700 717.500 979.100 716.400C978.200 716.900 977.200 717.300 976.100 717.500C975.200 716.600 974 716 972.700 716C970.100 716 968 718.100 968 720.700C968 721.100 968 721.400 968.100 721.800C964.200 721.600 960.700 719.700 958.400 716.900C958 717.600 957.800 718.400 957.800 719.300C957.800 720.900 958.600 722.400 959.900 723.200C959.100 723.200 958.400 723 957.800 722.600V722.700C957.800 725 959.400 726.900 961.600 727.300C961.200 727.400 960.800 727.500 960.300 727.500C960 727.500 959.700 727.500 959.400 727.400C960 729.300 961.700 730.600 963.800 730.700C962.200 732 960.200 732.700 958 732.700C957.600 732.700 957.200 732.700 956.800 732.600C958.900 734 961.400 734.700 964 734.700C972.700 734.700 977.400 727.500 977.400 721.300V720.700C978.300 720 979.100 719.200 979.700 718.300Z" fill="#3585c9"/><circle cx="996.500" cy="725" r="11.600" fill="#3585c9"/><text x="988.300" y="729" font-family="Liberation Serif" font-size="19" fill="#fff">g</text><path d="M1001.300 721.200V726.200M998.800 723.700H1003.800" stroke="#fff" stroke-width="1" fill="none"/></svg>
<svg class="a" style="left:1004px;top:749px" width="8" height="8" viewBox="0 0 8 8"><g fill="#b6ada5"><rect x="6" y="0" width="2" height="2"/><rect x="3" y="3" width="2" height="2"/><rect x="6" y="3" width="2" height="2"/><rect x="0" y="6" width="2" height="2"/><rect x="3" y="6" width="2" height="2"/><rect x="6" y="6" width="2" height="2"/></g></svg>
<!-- WINDOW BORDERS -->
<div class="a" style="left:1px;top:36px;width:1014px;height:1px;background:#fbfdff"></div><div class="a" style="left:1px;top:37px;width:1014px;height:1px;background:#eef6fe"></div>
<div class="a" style="left:1px;top:36px;width:1px;height:723px;background:#f0f8ff"></div>
<div class="a" style="left:1014px;top:36px;width:1px;height:723px;background:#f0f8ff"></div>
<div class="a" style="left:1px;top:758px;width:1014px;height:1px;background:#f0f8ff"></div>
<div class="a" style="left:0;top:36px;width:1px;height:724px;background:#0b4a7c"></div>
<div class="a" style="left:1015px;top:36px;width:1px;height:724px;background:#0b4a7c"></div>
<div class="a" style="left:0;top:759px;width:1016px;height:1px;background:#0b4a7c"></div>
</div>
</body>
</html>
